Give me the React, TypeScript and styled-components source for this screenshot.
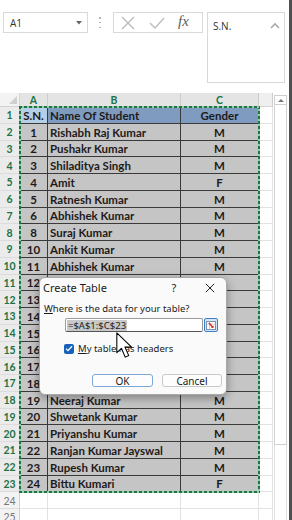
import React from 'react';
import styled, { createGlobalStyle } from 'styled-components';

const Global = createGlobalStyle`
  html, body { margin: 0; padding: 0; background: #fff; }
  body { width: 292px; height: 520px; overflow: hidden; }
  * { box-sizing: border-box; }
`;

const GREEN = '#217346';
const ROW_H = 16.75;
const HEAD_H = 14;

type Row = [string, string, string];
const data: Row[] = [
  ['S.N.', 'Name Of Student', 'Gender'],
  ['1', 'Rishabh Raj Kumar', 'M'],
  ['2', 'Pushakr Kumar', 'M'],
  ['3', 'Shiladitya Singh', 'M'],
  ['4', 'Amit', 'F'],
  ['5', 'Ratnesh Kumar', 'M'],
  ['6', 'Abhishek Kumar', 'M'],
  ['8', 'Suraj Kumar', 'M'],
  ['10', 'Ankit Kumar', 'M'],
  ['11', 'Abhishek Kumar', 'M'],
  ['12', '', ''],
  ['13', '', ''],
  ['14', '', ''],
  ['15', '', ''],
  ['16', '', ''],
  ['17', '', ''],
  ['18', '', ''],
  ['19', 'Neeraj Kumar', 'M'],
  ['20', 'Shwetank Kumar', 'M'],
  ['21', 'Priyanshu Kumar', 'M'],
  ['22', 'Ranjan Kumar Jayswal', 'M'],
  ['23', 'Rupesh Kumar', 'M'],
  ['24', 'Bittu Kumari', 'F'],
];

const Page = styled.div`
  position: relative;
  width: 292px;
  height: 520px;
  overflow: hidden;
  display: flex;
  background: #fff;
  font-family: Lato, 'Liberation Sans', sans-serif;
`;

const Main = styled.div`
  width: 289px;
  display: flex;
  flex-direction: column;
`;

const EdgeStrip = styled.div`
  width: 3px;
  background: #505050;
`;

/* ---------- formula bar ---------- */
const TopBar = styled.div`
  height: 93px;
  flex: none;
  display: flex;
  align-items: flex-start;
  padding: 12px 0 0 3px;
`;

const NameBox = styled.div`
  width: 85px;
  height: 21px;
  border: 1px solid #d9d9d9;
  display: flex;
  align-items: center;
  justify-content: space-between;
  padding: 0 5px 0 6px;
  font: 10px 'Open Sans', sans-serif;
  color: #333;
`;

const Dots = styled.div`
  margin: 5px 0 0 10px;
  width: 4px;
  height: 11px;
  display: flex;
  flex-direction: column;
  justify-content: space-between;
  align-items: center;
`;

const Dot = styled.span`
  width: 1.5px;
  height: 1.5px;
  background: #aaa;
  border-radius: 50%;
`;

const FxBox = styled.div`
  margin-left: 11px;
  width: 90px;
  height: 21px;
  border: 1px solid #d9d9d9;
  display: flex;
  align-items: center;
  padding-left: 7px;
  gap: 14px;
`;

const FxText = styled.span`
  font: italic 15px 'Liberation Serif', 'DejaVu Serif', serif;
  color: #5e5e5e;
  margin-left: -1px;
  line-height: 1;
  margin-top: -2px;
`;

const FormulaBox = styled.div`
  margin-left: 4px;
  width: 78px;
  height: 71px;
  border: 1px solid #d9d9d9;
  display: flex;
  align-items: flex-start;
  justify-content: space-between;
  padding: 6px 4px 0 5px;
  font: 10px 'Open Sans', sans-serif;
  color: #333;
`;

/* ---------- grid ---------- */
const SheetArea = styled.div`
  flex: 1;
  display: flex;
`;

const Sheet = styled.div`
  display: grid;
  grid-template-columns: 20px 28px 133px 78px 14px;
  grid-template-rows: ${HEAD_H}px;
  grid-auto-rows: ${ROW_H}px;
  align-content: start;
  width: 273px;
`;

const Corner = styled.div`
  position: relative;
  background: #f3f3f3;
  border-right: 1px solid #d4d4d4;
  border-bottom: 1px solid #d4d4d4;
  &::after {
    content: '';
    position: absolute;
    right: 2px;
    bottom: 2px;
    border-left: 8px solid transparent;
    border-bottom: 8px solid #cfcfcf;
  }
`;

const ColHead = styled.div<{ $active?: boolean }>`
  background: ${(p) => (p.$active ? '#e4e4e4' : '#efefef')};
  border-right: 1px solid #cdcdcd;
  border-bottom: 1px solid ${(p) => (p.$active ? GREEN : '#d4d4d4')};
  color: ${GREEN};
  font: 700 10.5px Lato, sans-serif;
  display: flex;
  align-items: center;
  justify-content: center;
`;

const RowHead = styled.div<{ $active?: boolean }>`
  background: ${(p) => (p.$active ? '#ebebeb' : '#f3f3f3')};
  border-right: 1px solid #d0d0d0;
  border-bottom: 1px solid #dcdcdc;
  color: ${(p) => (p.$active ? GREEN : '#777')};
  font: ${(p) => (p.$active ? 700 : 400)} 10.5px Lato, sans-serif;
  display: flex;
  align-items: center;
  justify-content: center;
  padding-top: 1px;
`;

type Kind = 'a1' | 'head' | 'data' | 'empty';
const bg: Record<Kind, string> = {
  a1: '#b6cfe9',
  head: '#7f9cc0',
  data: '#c5c5c5',
  empty: '#fff',
};

const Cell = styled.div<{ $kind: Kind; $align?: 'left' | 'center' }>`
  background: ${(p) => bg[p.$kind]};
  border-right: 1px solid ${(p) => (p.$kind === 'empty' ? '#e2e2e2' : '#3a3a3a')};
  border-bottom: 1px solid ${(p) => (p.$kind === 'empty' ? '#e2e2e2' : '#3a3a3a')};
  color: #1e1a1a;
  font: 700 11.5px Lato, 'Liberation Sans', sans-serif;
  display: flex;
  align-items: center;
  justify-content: ${(p) => (p.$align === 'left' ? 'flex-start' : 'center')};
  padding: 1px 0 0 ${(p) => (p.$align === 'left' ? '2px' : '0')};
  white-space: nowrap;
  overflow: hidden;
`;

const Selection = styled.div`
  position: absolute;
  left: 19px;
  top: ${93 + HEAD_H - 1}px;
  width: 241px;
  height: ${ROW_H * 23 + 2}px;
  pointer-events: none;
  background:
    repeating-linear-gradient(90deg, ${GREEN} 0 3px, #8fd1a7 3px 5px) top left / 100% 2px no-repeat,
    repeating-linear-gradient(90deg, ${GREEN} 0 3px, #8fd1a7 3px 5px) bottom left / 100% 2px no-repeat,
    repeating-linear-gradient(180deg, ${GREEN} 0 3px, #8fd1a7 3px 5px) top left / 2px 100% no-repeat,
    repeating-linear-gradient(180deg, ${GREEN} 0 3px, #8fd1a7 3px 5px) top right / 2px 100% no-repeat;
`;

/* ---------- scrollbar ---------- */
const VScroll = styled.div`
  margin-top: 2px;
  width: 16px;
  padding: 0 2px 0 1px;
  display: flex;
  flex-direction: column;
`;

const ScrollUp = styled.div`
  height: 10px;
  border: 1px solid #cfcfcf;
  display: flex;
  align-items: center;
  justify-content: center;
  &::before {
    content: '';
    border-left: 3px solid transparent;
    border-right: 3px solid transparent;
    border-bottom: 3px solid #777;
  }
`;

const ScrollThumb = styled.div`
  height: 340px;
  border: 1px solid #d0d0d0;
  border-top: none;
  background: #fff;
`;

const ScrollTrack = styled.div`
  flex: 1;
  border-left: 1px solid #e0e0e0;
  border-right: 1px solid #e0e0e0;
`;

/* ---------- dialog ---------- */
const Dialog = styled.div`
  position: absolute;
  left: 39px;
  top: 277px;
  width: 188px;
  height: 118px;
  background: #fafafa;
  border: 1px solid #a8a8a8;
  border-radius: 6px;
  box-shadow: 0 3px 10px rgba(0, 0, 0, 0.35);
  display: flex;
  flex-direction: column;
  font-family: 'Noto Sans', 'Open Sans', sans-serif;
  color: #1b1b1b;
`;

const TitleBar = styled.div`
  height: 18px;
  display: flex;
  align-items: center;
  padding: 1px 0 0 3px;
  font-size: 11px;
`;

const Title = styled.span`
  flex: 1;
`;

const Help = styled.span`
  width: 10px;
  text-align: center;
  font-size: 11px;
`;

const CloseBtn = styled.span`
  width: 10px;
  height: 10px;
  margin: 0 11px 0 26px;
  display: flex;
`;

const Prompt = styled.div`
  margin: 7px 0 0 4px;
  font-size: 9.5px;
  line-height: 12px;
`;

const Key = styled.span`
  text-decoration: underline;
`;

const InputRow = styled.div`
  margin: 3px 0 0 25px;
  display: flex;
  gap: 1px;
`;

const RangeInput = styled.div`
  width: 138px;
  height: 14px;
  background: #fff;
  border: 1px solid #9a9a9a;
  border-bottom-color: #555;
  border-radius: 2px;
  display: flex;
  align-items: center;
  padding-left: 1px;
  font-size: 9.5px;
`;

const Selected = styled.span`
  background: #c8c8c8;
  line-height: 11px;
  padding: 0 1px;
`;

const RangeBtn = styled.div`
  width: 14px;
  height: 14px;
  background: #d4e6f7;
  border: 1px solid #3d7fc4;
  border-radius: 2px;
  display: flex;
  align-items: center;
  justify-content: center;
`;

const CheckRow = styled.div`
  margin: 10px 0 0 24px;
  display: flex;
  align-items: center;
  gap: 4px;
  font-size: 9.5px;
`;

const CheckBox = styled.div`
  width: 10px;
  height: 10px;
  border-radius: 2px;
  background: #1762b8;
  display: flex;
  align-items: center;
  justify-content: center;
`;

const ButtonRow = styled.div`
  margin: 19px 0 0 52px;
  display: flex;
  gap: 9px;
`;

const Button = styled.div<{ $primary?: boolean }>`
  width: ${(p) => (p.$primary ? 61 : 60)}px;
  height: 13px;
  background: #fdfdfd;
  border: 1px solid ${(p) => (p.$primary ? '#7ea7d3' : '#c8c8c8')};
  border-radius: 3px;
  display: flex;
  align-items: center;
  justify-content: center;
  font-size: 10px;
`;

const Cursor = styled.svg`
  position: absolute;
  left: 116px;
  top: 332px;
`;

export default function App() {
  return (
    <Page>
      <Global />
      <Main>
        <TopBar>
          <NameBox>
            <span>A1</span>
            <svg width="6" height="4" viewBox="0 0 6 4">
              <path d="M0 0 L6 0 L3 3.5 Z" fill="#666" />
            </svg>
          </NameBox>
          <Dots>
            <Dot />
            <Dot />
            <Dot />
          </Dots>
          <FxBox>
            <svg width="14" height="14" viewBox="0 0 14 14">
              <path d="M1 1 L13 13 M13 1 L1 13" stroke="#b9b9b9" strokeWidth="1.3" fill="none" />
            </svg>
            <svg width="16" height="12" viewBox="0 0 16 12">
              <path d="M1 6 L6 11 L15 1" stroke="#c2c2c2" strokeWidth="1.6" fill="none" />
            </svg>
            <FxText>fx</FxText>
          </FxBox>
          <FormulaBox>
            <span>S.N.</span>
            <svg width="10" height="7" viewBox="0 0 10 7" style={{ marginTop: 3 }}>
              <path d="M1 6 L5 2 L9 6" stroke="#aaa" strokeWidth="1.6" fill="none" />
            </svg>
          </FormulaBox>
        </TopBar>
        <SheetArea>
          <Sheet>
            <Corner />
            <ColHead $active>A</ColHead>
            <ColHead $active>B</ColHead>
            <ColHead $active>C</ColHead>
            <ColHead />
            {data.map((r, i) => {
              const first = i === 0;
              return (
                <React.Fragment key={i}>
                  <RowHead $active>{i + 1}</RowHead>
                  <Cell $kind={first ? 'a1' : 'data'}>{r[0]}</Cell>
                  <Cell $kind={first ? 'head' : 'data'} $align="left">
                    {r[1]}
                  </Cell>
                  <Cell $kind={first ? 'head' : 'data'}>{r[2]}</Cell>
                  <Cell $kind="empty" />
                </React.Fragment>
              );
            })}
            {[24, 25].map((n) => (
              <React.Fragment key={n}>
                <RowHead>{n}</RowHead>
                <Cell $kind="empty" />
                <Cell $kind="empty" />
                <Cell $kind="empty" />
                <Cell $kind="empty" />
              </React.Fragment>
            ))}
          </Sheet>
          <VScroll>
            <ScrollUp />
            <ScrollThumb />
            <ScrollTrack />
          </VScroll>
        </SheetArea>
      </Main>
      <EdgeStrip />
      <Selection />
      <Dialog>
        <TitleBar>
          <Title>Create Table</Title>
          <Help>?</Help>
          <CloseBtn>
            <svg width="10" height="10" viewBox="0 0 10 10">
              <path d="M0.8 0.8 L9.2 9.2 M9.2 0.8 L0.8 9.2" stroke="#222" strokeWidth="1" fill="none" />
            </svg>
          </CloseBtn>
        </TitleBar>
        <Prompt>
          <Key>W</Key>here is the data for your table?
        </Prompt>
        <InputRow>
          <RangeInput>
            <Selected>=$A$1:$C$23</Selected>
          </RangeInput>
          <RangeBtn>
            <svg width="10" height="9" viewBox="0 0 10 9">
              <rect x="0.5" y="0.5" width="9" height="8" fill="#fff" stroke="#7a8fa8" />
              <path d="M0.5 3 H9.5 M3.5 0.5 V8.5" stroke="#b7c4d4" strokeWidth="0.8" />
              <path d="M3 2 L7 6.5" stroke="#d0312d" strokeWidth="1.6" />
              <path d="M5 6.8 L7.6 7 L7.4 4.4 Z" fill="#d0312d" />
            </svg>
          </RangeBtn>
        </InputRow>
        <CheckRow>
          <CheckBox>
            <svg width="8" height="7" viewBox="0 0 8 7">
              <path d="M1 3.6 L3 5.6 L7 1.2" stroke="#fff" strokeWidth="1.3" fill="none" />
            </svg>
          </CheckBox>
          <span>
            <Key>M</Key>y table has headers
          </span>
        </CheckRow>
        <ButtonRow>
          <Button $primary>OK</Button>
          <Button>Cancel</Button>
        </ButtonRow>
      </Dialog>
      <Cursor width="19" height="27" viewBox="0 0 19 27">
        <g transform="scale(1.18)">
          <path
            d="M0.7 0.7 L0.7 17.5 L4.6 13.8 L7.8 21.3 L10.8 20 L7.6 12.8 L13.2 12.8 Z"
            fill="#fff"
            stroke="#000"
            strokeWidth="0.9"
            strokeLinejoin="round"
          />
        </g>
      </Cursor>
    </Page>
  );
}
